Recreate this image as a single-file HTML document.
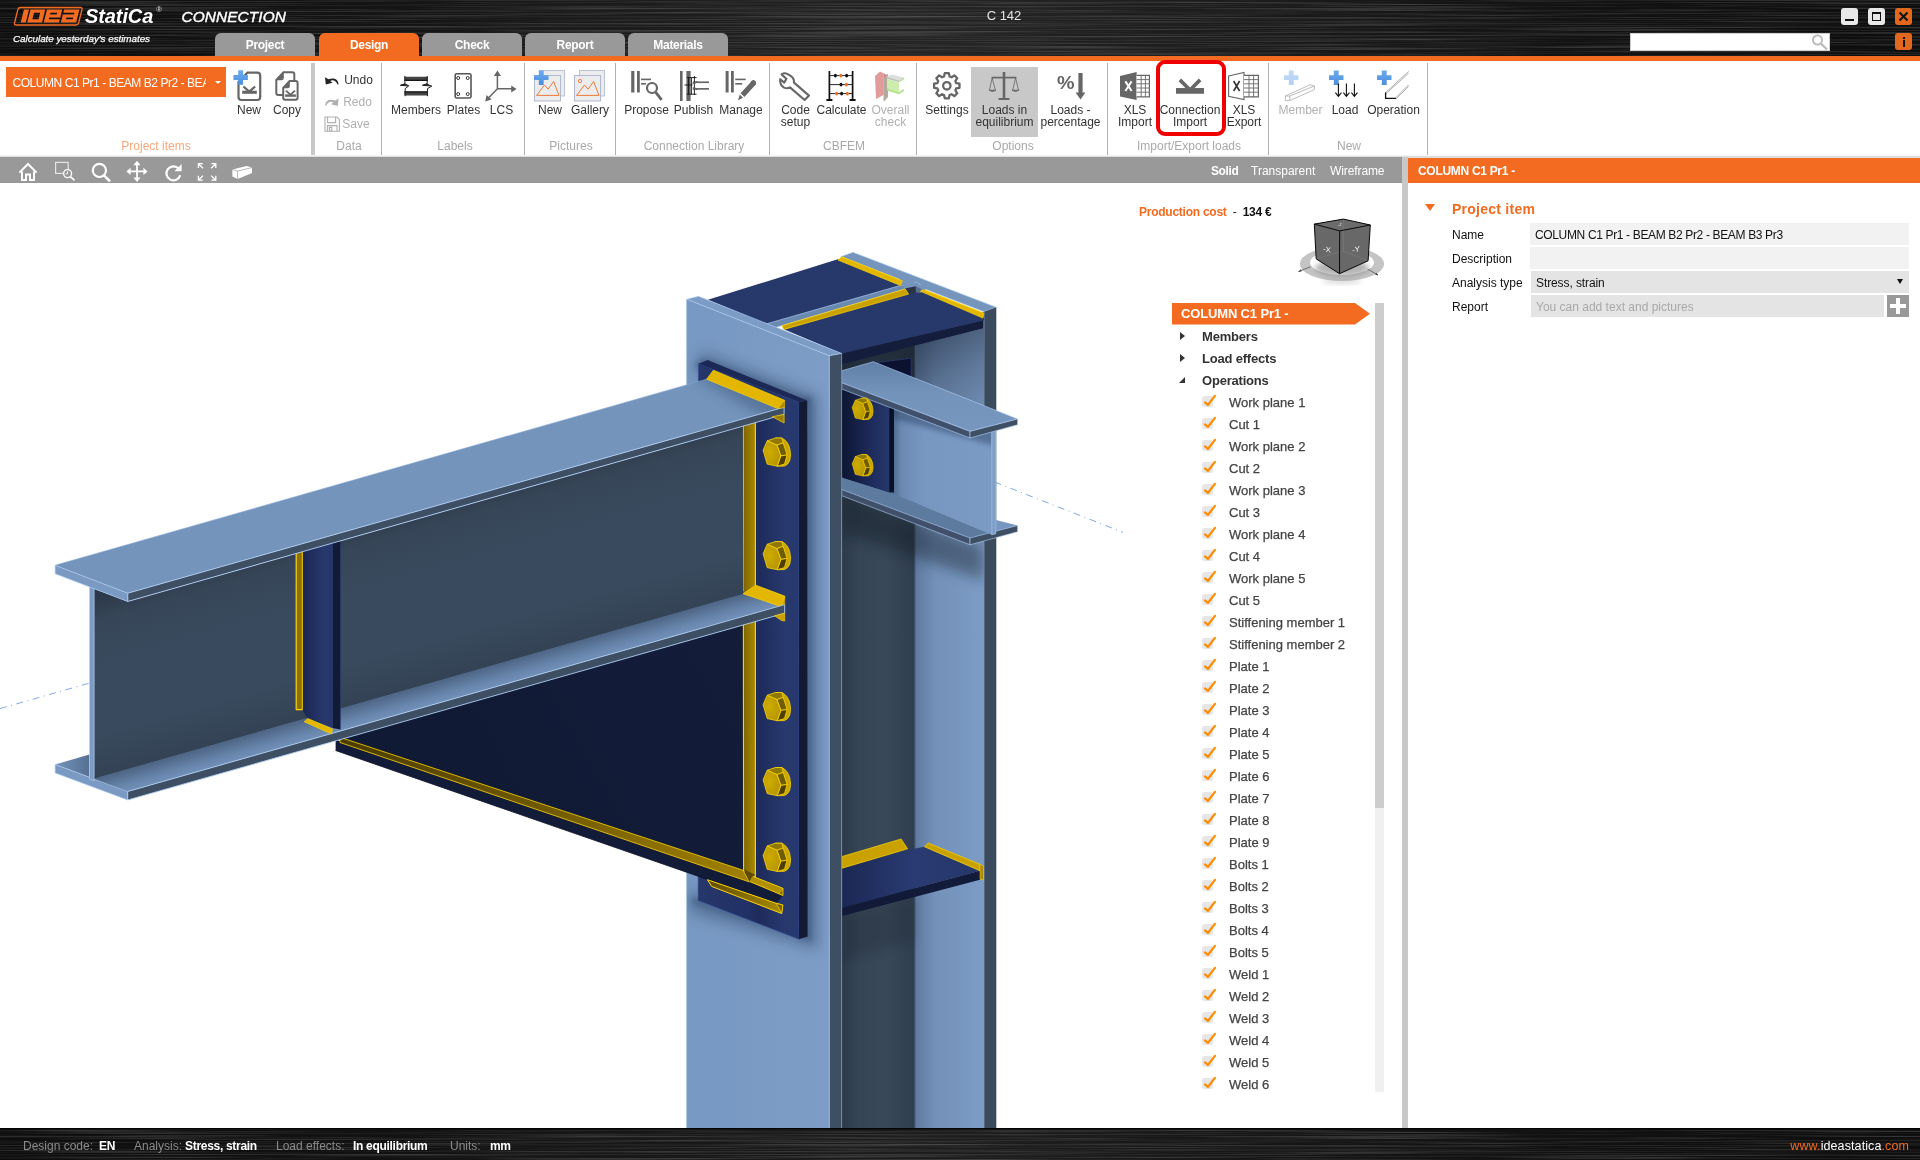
<!DOCTYPE html>
<html><head><meta charset="utf-8"><title>IDEA StatiCa Connection</title>
<style>
*{box-sizing:border-box;margin:0;padding:0}
html,body{width:1920px;height:1160px;overflow:hidden;background:#fff;-webkit-font-smoothing:antialiased;font-family:"Liberation Sans",sans-serif;font-size:12px;color:#333}
.abs{position:absolute}
#title{left:0;top:0;width:1920px;height:56px;background:#141414;overflow:hidden}
#oline{left:0;top:56px;width:1920px;height:5px;background:#f26b21}
.tab{position:absolute;top:33px;width:100px;height:23px;background:#999;border-radius:6px 6px 0 0;color:#fff;font-weight:bold;font-size:12px;text-align:center;line-height:24px;letter-spacing:-0.3px}
.tab.on{background:#f26b21}
.wbtn{position:absolute;width:17px;height:17px;border-radius:3px;background:#e8e8e8}
#ribbon{left:0;top:61px;width:1920px;height:96px;background:#fff}
.sep{position:absolute;top:2px;width:1px;height:92px;background:#b4b4b4}
.glab{position:absolute;top:78px;height:14px;line-height:14px;font-size:12px;color:#a9a9a9;text-align:center;white-space:nowrap;transform:translateX(-50%)}
.blab{position:absolute;top:43px;line-height:12.4px;font-size:12px;color:#333;text-align:center;white-space:nowrap;transform:translateX(-50%)}
.blab.dis{color:#b0b0b0}
.ico{position:absolute;overflow:visible}
#vbar{left:0;top:157px;width:1402px;height:26px;background:#999}
.vtxt{position:absolute;top:1px;line-height:27px;color:#fff;font-size:12px;white-space:nowrap}
#split{left:1402px;top:157px;width:6px;height:971px;background:#c8c8c8}
#rhead{left:1408px;top:157px;width:512px;height:26px;background:#f26b21;border-top:1px solid #d9dde2;color:#fff;font-weight:bold;font-size:12px;line-height:27px;padding-left:10px;letter-spacing:-0.3px}
#rpanel{left:1408px;top:183px;width:512px;height:945px;background:#fff}
.plab{position:absolute;left:44px;font-size:12px;color:#111;line-height:24px;white-space:nowrap}
.pfld{position:absolute;left:122px;height:22px;background:#f2f2f2;font-size:12px;color:#111;line-height:24px;padding-left:5px;white-space:nowrap;letter-spacing:-0.35px}
#status{left:0;top:1128px;width:1920px;height:32px;background:#121212;overflow:hidden}
.st{position:absolute;top:0;line-height:36px;font-size:12px;white-space:nowrap;color:#8a8a8a}
.st b{color:#fff;font-weight:bold;letter-spacing:-0.3px}
#view{left:0;top:183px;width:1402px;height:945px;background:#fff;overflow:hidden}
.ti{position:absolute;left:1229px;font-size:13px;color:#444;line-height:24px;white-space:nowrap;-webkit-text-stroke:0.25px #444}
.tg{position:absolute;left:1202px;font-size:13px;font-weight:bold;color:#333;line-height:24px;white-space:nowrap;letter-spacing:-0.2px}
.cb{position:absolute;left:1202px;width:11px;height:11px;background:#e6e6e6;border-radius:2.5px}
#wrap{position:absolute;left:0;top:0;width:1920px;height:1160px;will-change:transform;transform:translateZ(0)}
</style></head><body><div id="wrap">
<svg width="0" height="0" style="position:absolute"><defs>
<filter id="brush" x="0" y="0" width="100%" height="100%">
<feTurbulence type="fractalNoise" baseFrequency="0.004 0.8" numOctaves="3" seed="7" result="n"/>
<feColorMatrix type="matrix" values="0 0 0 0 1  0 0 0 0 1  0 0 0 0 1  0.42 0 0 0 -0.175"/>
</filter>
<linearGradient id="hl" x1="0" y1="0" x2="1" y2="0"><stop offset="0" stop-color="#fff" stop-opacity="0"/><stop offset="0.22" stop-color="#fff" stop-opacity="0.035"/><stop offset="0.48" stop-color="#fff" stop-opacity="0.095"/><stop offset="0.75" stop-color="#fff" stop-opacity="0.035"/><stop offset="1" stop-color="#fff" stop-opacity="0"/></linearGradient>
</defs></svg>
<div id="title" class="abs">
<svg class="abs" style="left:0;top:0" width="1920" height="56"><rect width="1920" height="56" fill="#0d0d0d"/><rect width="1920" height="56" fill="#fff" filter="url(#brush)"/><rect width="1920" height="56" fill="url(#hl)"/></svg>
<svg class="abs" style="left:10px;top:4px" width="80" height="26" viewBox="10 4 80 26">
<g transform="translate(22.3,9.5) skewX(-14) scale(1.02,1)" fill="#f26b21">
<rect x="1.6" y="0" width="5" height="13"/>
<path d="M8,0h14.5v13h-14.5z M12.3,3.2v6.6h6v-6.6z" fill-rule="evenodd"/>
<path d="M24.2,0h15v8h-10.8v1.8h10.8v3.2h-15z M28.4,3.2v1.8h6.6v-1.8z" fill-rule="evenodd"/>
<path d="M41,0h15v13h-15v-8h10.8v-1.8h-10.8z M45.2,8v1.8h6.6v-1.8z" fill-rule="evenodd"/>
</g>
<path d="M20.5,7.5 H80.5 Q82.5,7.5 82,9.5 L78.6,23 Q78,25 76,25 H16 Q14,25 14.5,23 L17.9,9.5 Q18.5,7.5 20.5,7.5Z" fill="none" stroke="#f26b21" stroke-width="1.3"/>
</svg>
<div class="abs" style="left:85px;top:4px;font:italic bold 20px 'Liberation Sans',sans-serif;color:#fff;line-height:24px;letter-spacing:-0.1px">StatiCa</div>
<div class="abs" style="left:156px;top:5px;font:italic 8px 'Liberation Sans',sans-serif;color:#ddd;line-height:10px">&reg;</div>
<div class="abs" style="left:181.5px;top:6px;font:italic 15.4px 'Liberation Sans',sans-serif;color:#fff;line-height:22px;letter-spacing:0.1px;-webkit-text-stroke:0.4px #fff">CONNECTION</div>
<div class="abs" style="left:13px;top:32px;font:italic 9.9px 'Liberation Sans',sans-serif;color:#fff;line-height:13px;letter-spacing:-0.05px;-webkit-text-stroke:0.25px #fff;white-space:nowrap">Calculate yesterday's estimates</div>
<div class="abs" style="left:954px;top:8px;width:100px;text-align:center;font-size:13px;color:#e6e6e6;line-height:16px">C 142</div>
<div class="tab" style="left:215px">Project</div>
<div class="tab on" style="left:319px">Design</div>
<div class="tab" style="left:422px">Check</div>
<div class="tab" style="left:525px">Report</div>
<div class="tab" style="left:628px">Materials</div>
<div class="wbtn" style="left:1841px;top:8px"><div class="abs" style="left:4px;top:11px;width:9px;height:2px;background:#111"></div></div>
<div class="wbtn" style="left:1868px;top:8px"><div class="abs" style="left:4px;top:4px;width:9px;height:9px;border:1.5px solid #111;border-top-width:2.5px"></div></div>
<div class="wbtn" style="left:1895px;top:8px;background:#e2681e"><svg class="abs" style="left:0;top:0" width="17" height="17"><path d="M4.5,4.5L12.5,12.5M12.5,4.5L4.5,12.5" stroke="#111" stroke-width="2"/></svg></div>
<div class="wbtn" style="left:1895px;top:33px;background:#e2681e"><div class="abs" style="left:7.5px;top:3.5px;width:2.4px;height:2.4px;background:#111"></div><div class="abs" style="left:7.5px;top:7px;width:2.4px;height:6.5px;background:#111"></div></div>
<div class="abs" style="left:1630px;top:33px;width:200px;height:18px;background:#fff;border:1px solid #cfcfcf"></div>
<svg class="abs" style="left:1810px;top:33px" width="20" height="18"><circle cx="7.5" cy="7" r="4.6" fill="none" stroke="#b9b9b9" stroke-width="1.8"/><path d="M10.8,10.5L17,16.5" stroke="#b9b9b9" stroke-width="2.2"/></svg>
</div>
<div id="oline" class="abs"></div>
<div id="ribbon" class="abs">
<div class="abs" style="left:6px;top:6px;width:220px;height:30px;background:#f26b21"></div>
<div class="abs" style="left:12.5px;top:6.5px;width:193px;height:30px;overflow:hidden;white-space:nowrap;color:#fff;font-size:12px;line-height:30px;letter-spacing:-0.45px">COLUMN C1 Pr1 - BEAM B2 Pr2 - BEAM B3 Pr3</div>
<div class="abs" style="left:215px;top:20px;width:0;height:0;border-left:3px solid transparent;border-right:3px solid transparent;border-top:3.5px solid #fff"></div>
<div class="abs" style="left:311px;top:2px;width:4px;height:92px;background:#c8c8c8"></div>
<div class="sep" style="left:381px"></div><div class="sep" style="left:524px"></div><div class="sep" style="left:615px"></div><div class="sep" style="left:769px"></div><div class="sep" style="left:916px"></div><div class="sep" style="left:1107px"></div><div class="sep" style="left:1268px"></div><div class="sep" style="left:1427px"></div>
<div class="abs" style="left:971px;top:6px;width:67px;height:70px;background:#c8c8c8"></div>
<div class="glab" style="left:156px;color:#f6a77a">Project items</div>
<div class="glab" style="left:349px">Data</div>
<div class="glab" style="left:455px">Labels</div>
<div class="glab" style="left:571px">Pictures</div>
<div class="glab" style="left:694px">Connection Library</div>
<div class="glab" style="left:844px">CBFEM</div>
<div class="glab" style="left:1013px">Options</div>
<div class="glab" style="left:1189px">Import/Export loads</div>
<div class="glab" style="left:1349px">New</div>
<div class="blab" style="left:249px">New</div>
<div class="blab" style="left:287px">Copy</div>
<div class="blab" style="left:358.5px;top:13px">Undo</div>
<div class="blab dis" style="left:357.5px;top:35px">Redo</div>
<div class="blab dis" style="left:356px;top:57px">Save</div>
<div class="blab" style="left:416px">Members</div>
<div class="blab" style="left:463.5px">Plates</div>
<div class="blab" style="left:501.5px">LCS</div>
<div class="blab" style="left:550px">New</div>
<div class="blab" style="left:590px">Gallery</div>
<div class="blab" style="left:646.5px">Propose</div>
<div class="blab" style="left:693.5px">Publish</div>
<div class="blab" style="left:741px">Manage</div>
<div class="blab" style="left:795.5px">Code<br>setup</div>
<div class="blab" style="left:841.5px">Calculate</div>
<div class="blab dis" style="left:890.5px">Overall<br>check</div>
<div class="blab" style="left:947px">Settings</div>
<div class="blab" style="left:1004.5px">Loads in<br>equilibrium</div>
<div class="blab" style="left:1070.5px">Loads -<br>percentage</div>
<div class="blab" style="left:1135px">XLS<br>Import</div>
<div class="blab" style="left:1190px">Connection<br>Import</div>
<div class="blab" style="left:1244px">XLS<br>Export</div>
<div class="blab dis" style="left:1300.5px">Member</div>
<div class="blab" style="left:1345px">Load</div>
<div class="blab" style="left:1393.5px">Operation</div>
<div class="abs" style="left:1156px;top:-1px;width:70px;height:76px;border:4px solid #f00000;border-radius:9px"></div>
<svg class="abs" style="left:0;top:0" width="1920" height="96" viewBox="0 61 1920 96">
<defs>
<linearGradient id="plus" x1="0" y1="0" x2="0" y2="1"><stop offset="0" stop-color="#6dabef"/><stop offset="1" stop-color="#4d8fde"/></linearGradient>
<path id="pl" d="M4.8,0h4.9v4.8h4.8v4.9h-4.8v4.8h-4.9v-4.8h-4.8v-4.9h4.8z"/>
<path id="vb" d="M0,0 L2,-2 L7,3 L12,-2 L14,0 L9.2,5 H14 V10 H0 V5 H4.8Z"/>
</defs>
<!-- New -->
<path d="M247.5,72.6 H257.2 Q260.2,72.6 260.2,75.6 V97 Q260.2,100 257.2,100 H241.5 Q238.5,100 238.5,97 V81.6Z" fill="#fff" stroke="#666" stroke-width="2.2"/>
<path d="M243.4,86.5 L249.25,91.6 L255.1,86.5" fill="none" stroke="#666" stroke-width="2.3"/>
<rect x="242.2" y="90.7" width="14.6" height="3.1" fill="#666"/>
<use href="#pl" x="233.4" y="70.3" fill="url(#plus)"/>
<!-- Copy -->
<path d="M283.5,72.3 H292.3 Q294.3,72.3 294.3,74.3 V93 Q294.3,95 292.3,95 H278.3 Q276.3,95 276.3,93 V80Z" fill="#fff" stroke="#666" stroke-width="2"/>
<path d="M276.6,80.3 L283.8,72.6 V78 Q283.8,80.3 281.5,80.3Z" fill="#666"/>
<path d="M289.6,81 H295.6 Q297.6,81 297.6,83 V97.8 Q297.6,99.8 295.6,99.8 H285.2 Q283.2,99.8 283.2,97.8 V88Z" fill="#fff" stroke="#666" stroke-width="2"/>
<path d="M283.5,88.2 L289.8,81.3 V86.2 Q289.8,88.2 287.8,88.2Z" fill="#666"/>
<path d="M285.8,90.6 L290.5,94.6 L295,90.6" fill="none" stroke="#666" stroke-width="1.8"/>
<rect x="285.1" y="94.4" width="10.8" height="2.4" fill="#666"/>
<!-- Undo -->
<path d="M325,77.2 L325.8,84.6 L332.6,82.8 L330.2,81 Q334.5,78.6 337.6,84.4 L338.6,84.2 Q337.6,76.4 328.4,79.2Z" fill="#222"/>
<!-- Redo -->
<path d="M338.6,98.6 L337.8,106 L331,104.2 L333.4,102.4 Q329.1,100 326,105.8 L325,105.6 Q326,97.8 335.2,100.6Z" fill="#b0b0b0"/>
<!-- Save -->
<path d="M325,117 H337 L339.4,119.4 V131.2 H325Z M327.6,117 V122.6 H335.6 V117 M327.4,131 V125.6 H337 V131 M329.4,127.4 h2.4 v3.4 h-2.4z" fill="none" stroke="#b0b0b0" stroke-width="1.1"/>
<!-- Members -->
<path d="M404.4,76.8 H427.8 V80.8 H404.4Z M404.4,91.4 H427.8 V95.5 H404.4Z" fill="#444"/>
<path d="M404.4,80.3H427.8M404.4,91.9H427.8" stroke="#000" stroke-width="1" fill="none"/>
<path d="M404.9,76 V83.7 L400.3,85.3 L408.6,86 L405.2,88.6 V96.2 M427.2,76 V83.7 L422.4,85.3 L431.8,86.1 L427.5,88.6 V96.2" stroke="#222" stroke-width="1" fill="none"/>
<path d="M400.3,85.3 L405.4,83.6 L409.8,86.1Z M422.2,85.3 L427.2,83.6 L431.8,86.1Z" fill="#222"/>
<!-- Plates -->
<rect x="455.2" y="73.7" width="15.8" height="24.3" rx="1.6" fill="#fff" stroke="#555" stroke-width="1.6"/>
<g fill="none" stroke="#333" stroke-width="1"><circle cx="458.2" cy="78" r="1.5"/><circle cx="467.7" cy="78" r="1.5"/><circle cx="458.2" cy="94.1" r="1.5"/><circle cx="467.7" cy="94.1" r="1.5"/></g>
<!-- LCS -->
<path d="M497.4,74 V88.8 H512.5 M497.4,88.8 L488,98.6" stroke="#666" stroke-width="1.5" fill="none"/>
<path d="M497.4,70.4 L501,76 H493.8Z M516.6,88.9 L511.2,92.4 V85.4Z M485.2,101.5 L486.6,95 L491.6,99.6Z" fill="#666"/>
<!-- New picture -->
<g id="pic"><rect x="539.5" y="70.5" width="25" height="25.5" fill="#ececec" stroke="#b4bdd2" stroke-width="0.9"/><rect x="534.5" y="75.5" width="26" height="25.5" fill="#ececec" stroke="#a9b3cb" stroke-width="0.9"/>
<path d="M536.5,95.4 L544.5,85 L548,89.2 L553.6,81.5 L559,95.4Z" fill="none" stroke="#f07a3c" stroke-width="1"/></g>
<rect x="533.6" y="70" width="15" height="16" fill="#ececec" opacity="0.0"/>
<use href="#pl" x="534" y="70.4" fill="url(#plus)"/>
<!-- Gallery -->
<use href="#pic" x="40" y="0"/>
<circle cx="580" cy="81" r="1.7" fill="none" stroke="#f07a3c" stroke-width="0.9"/>
<!-- Propose -->
<g fill="#666"><rect x="631.2" y="71" width="3.2" height="21.5"/><rect x="637" y="71" width="2.8" height="21.5"/><rect x="641" y="78.6" width="10" height="1.6"/><rect x="641" y="83" width="5" height="1.6"/></g>
<circle cx="652" cy="88" r="5" fill="#fff" stroke="#666" stroke-width="2.2"/><path d="M655.6,92.2 L661.6,99.8" stroke="#666" stroke-width="2.8"/>
<!-- Publish -->
<g fill="#666"><rect x="680" y="71" width="2.6" height="30"/><rect x="686.4" y="71" width="4.2" height="30"/><rect x="693" y="81.4" width="16" height="1.7"/><rect x="693" y="88" width="16" height="1.7"/></g>
<path d="M684.5,85 h8 M686.8,77.6 h9.8 M686.8,94.2 h9.8 M694.4,76 v19 M688.6,77.6 v16.6 M691.4,77.6 v16.6" stroke="#111" stroke-width="0.9" fill="none"/>
<path d="M692.6,83.1 q3,0.2 4.6,-1.7 M692.6,88 q3,-0.2 4.6,1.7" stroke="#666" stroke-width="1.6" fill="none"/>
<!-- Manage -->
<g fill="#666"><rect x="725.6" y="71" width="3" height="21.5"/><rect x="731" y="71" width="2.8" height="21.5"/><rect x="735.2" y="78.6" width="10.5" height="1.6"/><rect x="735.2" y="83" width="7" height="1.6"/></g>
<path d="M752.2,80.4 L756,84.2 L744.4,97 L740.6,93.2Z M739.8,94.6 L743,97.8 L738,100.2Z" fill="#666"/>
<path d="M750.6,82 q2.4,-3.4 4.8,-1 q2,2.2 -1.2,4.6z" fill="#666"/>
<!-- Code setup: wrench -->
<path d="M788.6,74.6 Q785,72 781.6,74.4 L786.4,78.8 L784.2,82.6 L780.2,79.2 Q779.6,85 784,87.6 Q787,89 790,87.4 L804.6,100 L809,95.6 L794,82.6 Q794.6,77.6 788.6,74.6Z" fill="#fff" stroke="#666" stroke-width="2.1" stroke-linejoin="round"/>
<!-- Calculate: abacus -->
<path d="M829.4,71 V100 M852.6,71 V100" stroke="#111" stroke-width="1.7"/><path d="M826.4,100 H832.4 M849.6,100 H855.6" stroke="#111" stroke-width="1.8"/>
<path d="M829.4,75.6 H852.6 M829.4,84.6 H852.6 M829.4,93.6 H852.6" stroke="#111" stroke-width="0.9"/>
<g fill="#111"><ellipse cx="835.4" cy="75.6" rx="1.5" ry="1.9"/><ellipse cx="846.6" cy="75.6" rx="1.5" ry="1.9"/><ellipse cx="841" cy="84.6" rx="1.5" ry="1.9"/><ellipse cx="841.6" cy="93.6" rx="1.5" ry="1.9"/></g>
<g fill="#f26b21"><ellipse cx="840.8" cy="75.6" rx="1.5" ry="1.9"/><ellipse cx="846.4" cy="84.6" rx="1.5" ry="1.9"/><ellipse cx="836.6" cy="93.6" rx="1.5" ry="1.9"/><ellipse cx="847.4" cy="93.6" rx="1.5" ry="1.9"/></g>
<!-- Overall check -->
<g opacity="0.85"><path d="M875,76 L880,71.4 L883.6,73.4 V95 L876,99Z" fill="#de8a8a"/><path d="M880,71.4 L887,75 V98 L883.6,101 L883.6,73.4Z" fill="#c96f6f"/><path d="M884,78 L888,73.6 V97 L884,101.6Z" fill="#a99a8c"/>
<path d="M886.5,76.4 L892,74.4 L904,77.4 L899,80.4Z" fill="#d9d9d9"/><path d="M886.5,76.4 L899,80.4 V82.2 L886.5,78.4Z" fill="#b5b5b5"/><path d="M887,78.6 L899,82.4 L899,92 L887,88.6Z" fill="#c4ea9f"/><path d="M899,80.4 L904,77.4 V79.2 L899,82.2Z M899,92 L904,89 V91 L899,94.2 L887,90.6 V88.6Z" fill="#a8dc78"/></g>
<!-- Settings gear -->
<g transform="translate(946.8,85.8)"><path id="gear" d="M-2.2,-13.2 H2.2 L3,-9.6 L5.2,-8.7 L8.3,-10.8 L11.4,-7.7 L9.3,-4.6 L10.2,-2.4 L13.8,-1.7 V2.7 L10.2,3.4 L9.3,5.6 L11.4,8.7 L8.3,11.8 L5.2,9.7 L3,10.6 L2.2,14.2 H-2.2 L-3,10.6 L-5.2,9.7 L-8.3,11.8 L-11.4,8.7 L-9.3,5.6 L-10.2,3.4 L-13.8,2.7 V-1.7 L-10.2,-2.4 L-9.3,-4.6 L-11.4,-7.7 L-8.3,-10.8 L-5.2,-8.7 L-3,-9.6Z" transform="translate(0,-0.5) scale(0.92)" fill="#fff" stroke="#666" stroke-width="2.5" stroke-linejoin="round"/><circle cx="0" cy="0" r="3.7" fill="#fff" stroke="#666" stroke-width="2.3"/></g>
<!-- Scales -->
<g stroke="#666" fill="none"><path d="M1004,72 V98.6" stroke-width="2.6"/><path d="M998.6,99 H1009.4" stroke-width="2"/><path d="M991.6,77.6 H1016.4" stroke-width="1.7"/><path d="M992.2,78 L989.4,90.4 M992.2,78 L995.4,90.4 M1015.6,78 L1012.6,90.4 M1015.6,78 L1018.6,90.4" stroke-width="0.8"/></g>
<path d="M989,90.2 H996 Q992.5,92.6 989,90.2Z M1012,90.2 H1019 Q1015.5,92.6 1012,90.2Z" fill="#666" stroke="#666" stroke-width="0.8"/>
<!-- Loads % -->
<text x="1057" y="88.6" font-family="Liberation Sans, sans-serif" font-weight="bold" font-size="18.5" fill="#666" textLength="17.5" lengthAdjust="spacingAndGlyphs">%</text>
<path d="M1078.4,73 H1082.6 V92.6 H1085.4 L1080.5,99.4 L1075.6,92.6 H1078.4Z" fill="#666"/>
<!-- XLS import -->
<path d="M1120,76 L1136.6,72 V100 L1120,96.4Z" fill="#666"/>
<path d="M1136.6,75.4 H1149.4 V96.8 H1136.6" fill="#fff" stroke="#666" stroke-width="1.2"/>
<path d="M1136.6,79.6H1149.4M1136.6,83.8H1149.4M1136.6,88H1149.4M1136.6,92.2H1149.4M1141.2,75.4V96.8M1145.4,75.4V96.8" stroke="#666" stroke-width="0.9"/>
<path d="M1125.4,81.4 L1131.6,91 M1131.6,81.4 L1125.4,91" stroke="#fff" stroke-width="2"/>
<!-- Connection import -->
<path d="M1176,88 H1185.4 L1178.6,81.2 L1181.2,78.6 L1190,87.4 L1198.8,78.6 L1201.4,81.2 L1194.6,88 H1204 V93.8 H1176Z" fill="#666"/>
<!-- XLS export -->
<path d="M1228.6,76 L1244,72.4 V99.6 L1228.6,96.2Z" fill="#fff" stroke="#666" stroke-width="1.1"/>
<path d="M1244,75.4 H1258.4 V96.8 H1244" fill="#fff" stroke="#666" stroke-width="1.2"/>
<path d="M1244,79.6H1258.4M1244,83.8H1258.4M1244,88H1258.4M1244,92.2H1258.4M1249,75.4V96.8M1253.6,75.4V96.8" stroke="#666" stroke-width="0.9"/>
<path d="M1233.6,81 L1239.6,91 M1239.6,81 L1233.6,91" stroke="#333" stroke-width="1.6"/>
<!-- Member -->
<use href="#pl" x="1284" y="70.4" fill="url(#plus)" opacity="0.42"/>
<path d="M1285.4,96 L1310,84.8 L1314.4,86 V89.6 L1289.8,100.6 H1285.4Z M1285.4,96 H1289.8 V100.6 M1289.8,96 L1314.4,86" fill="#fff" stroke="#b4b4b4" stroke-width="0.9" stroke-linejoin="round"/>
<!-- Load -->
<use href="#pl" x="1329" y="70.4" fill="url(#plus)"/>
<path d="M1338.4,83.6 V96 M1346.4,83.6 V96 M1354.4,83.6 V96" stroke="#111" stroke-width="1.1"/>
<path d="M1335.4,92.6 L1338.4,96.4 L1341.4,92.6 M1343.4,92.6 L1346.4,96.4 L1349.4,92.6 M1351.4,92.6 L1354.4,96.4 L1357.4,92.6" stroke="#111" stroke-width="1.1" fill="none"/>
<!-- Operation -->
<use href="#pl" x="1377" y="70.4" fill="url(#plus)"/>
<path d="M1385.6,92.6 L1408.6,71.4 M1385.6,94 L1408.6,73.2 M1396,99 L1408.6,86.4 M1396,97.4 L1408.6,84.8" stroke="#9a9a9a" stroke-width="0.8"/>
<path d="M1385.6,92.6 V98.4 H1396" stroke="#111" stroke-width="1.3" fill="none"/>
</svg>
</div>
<div id="vbar" class="abs">
<svg class="abs" style="left:0;top:0" width="300" height="26" viewBox="0 157 300 26" fill="none" stroke="#fff">
<path d="M19.4,172.6 L28,164 L36.6,172.6 M22,171.4 V180 H26 V174.6 H30 V180 H34 V171.4" stroke-width="2"/>
<rect x="55.6" y="162.4" width="12.6" height="11" stroke-width="1.2" stroke="#e4e4e4"/>
<circle cx="67.6" cy="173.6" r="4" stroke-width="1.3" fill="#999"/><path d="M70.4,176.6 L74.6,180.4" stroke-width="1.5"/><path d="M67.6,171.4 V173.8 H65.6" stroke-width="0.9"/>
<circle cx="99.4" cy="170.4" r="6.6" stroke-width="2.2"/><path d="M104,175.4 L110,181.4" stroke-width="2.6"/>
<path d="M137,163.4 V179.6 M128.6,171.4 H145.2" stroke-width="1.8"/>
<path d="M137,160.8 L140.6,165.2 H133.4Z M137,182 L140.6,177.6 H133.4Z M126.4,171.4 L130.6,167.8 V175Z M147.6,171.4 L143.4,167.8 V175Z" fill="#fff" stroke="none"/>
<path d="M178.6,168.6 A7,7 0 1 0 180.2,175.2" stroke-width="2.2"/><path d="M181.6,164 V171.2 H174.4Z" fill="#fff" stroke="none"/>
<g stroke-width="1.3"><path d="M198.4,163.6 L203,168.2 M198.4,168 V163.6 H202.8 M215.8,163.6 L211.2,168.2 M211.4,163.6 H215.8 V168 M198.4,180.2 L203,175.6 M198.4,175.8 V180.2 H202.8 M215.8,180.2 L211.2,175.6 M211.4,180.2 H215.8 V175.8"/></g>
<path d="M232.4,169.4 L246.6,166 L252,167.6 V173 L237.6,179 L232.4,176.6Z" fill="#fff" stroke="none"/><path d="M232.4,169.4 L237.6,171 V179 M237.6,171 L252,167.6" stroke="#999" stroke-width="0.7"/>
</svg>
<div class="vtxt" style="left:1211px;font-weight:bold;letter-spacing:-0.4px">Solid</div>
<div class="vtxt" style="left:1251px">Transparent</div>
<div class="vtxt" style="left:1330px;letter-spacing:-0.1px">Wireframe</div>
</div>
<div class="abs" style="left:0;top:155px;width:1920px;height:2px;background:linear-gradient(#fff,#d4d4d4)"></div>
<div id="split" class="abs"></div>
<div id="rhead" class="abs">COLUMN C1 Pr1 -</div>
<div id="rpanel" class="abs">
<div class="abs" style="left:17px;top:21px;width:0;height:0;border-left:5.5px solid transparent;border-right:5.5px solid transparent;border-top:7.5px solid #f26b21"></div>
<div class="abs" style="left:44px;top:17px;font-size:14px;font-weight:bold;color:#f26b21;line-height:18px;letter-spacing:0.25px">Project item</div>
<div class="plab" style="top:40px">Name</div><div class="pfld" style="top:40px;width:379px">COLUMN C1 Pr1 - BEAM B2 Pr2 - BEAM B3 Pr3</div>
<div class="plab" style="top:64px">Description</div><div class="pfld" style="top:64px;width:379px"></div>
<div class="plab" style="top:88px">Analysis type</div><div class="pfld" style="top:88px;left:123px;width:378px;background:#e4e4e4;letter-spacing:-0.1px">Stress, strain</div>
<div class="abs" style="left:489px;top:96px;width:0;height:0;border-left:3.5px solid transparent;border-right:3.5px solid transparent;border-top:5px solid #111"></div>
<div class="plab" style="top:112px">Report</div><div class="pfld" style="top:112px;left:123px;width:353px;background:#e4e4e4;color:#a8a8a8;letter-spacing:0">You can add text and pictures</div>
<div class="abs" style="left:479px;top:112px;width:22px;height:22px;background:#999"><div class="abs" style="left:9px;top:3px;width:4px;height:16px;background:#fff"></div><div class="abs" style="left:3px;top:9px;width:16px;height:4px;background:#fff"></div></div>
</div>
<div id="status" class="abs"><svg class="abs" style="left:0;top:0" width="1920" height="32"><rect width="1920" height="32" fill="#0d0d0d"/><rect width="1920" height="32" fill="#fff" filter="url(#brush)"/><rect width="1920" height="32" fill="url(#hl)" opacity="0.7"/><rect width="1920" height="1.5" fill="#050505"/></svg>
<div class="st" style="left:23px">Design code:</div><div class="st" style="left:99px"><b>EN</b></div>
<div class="st" style="left:134px">Analysis:</div><div class="st" style="left:185px"><b>Stress, strain</b></div>
<div class="st" style="left:276px">Load effects:</div><div class="st" style="left:353px"><b>In equilibrium</b></div>
<div class="st" style="left:450px">Units:</div><div class="st" style="left:490px"><b>mm</b></div>
<div class="st" style="right:11px;color:#f26b21;font-size:12.5px;letter-spacing:0.1px">www.<span style="color:#fff">ideastatica</span>.com</div>
</div>
<div id="view" class="abs">
<svg class="abs" style="left:0;top:0" width="1402" height="945" viewBox="0 183 1402 945" shape-rendering="auto"><defs><linearGradient id="gWeb" x1="0" y1="0" x2="0" y2="1"><stop offset="0" stop-color="#2e3b4d"/><stop offset="1" stop-color="#3a4a5e"/></linearGradient><linearGradient id="gBweb" gradientUnits="userSpaceOnUse" x1="400" y1="510" x2="452" y2="694"><stop offset="0" stop-color="#2b3849"/><stop offset="0.12" stop-color="#364557"/><stop offset="0.35" stop-color="#3a4a5e"/><stop offset="0.7" stop-color="#3a4a5e"/><stop offset="0.92" stop-color="#334254"/><stop offset="1" stop-color="#2c3949"/></linearGradient><linearGradient id="gBbot" gradientUnits="userSpaceOnUse" x1="430" y1="684" x2="438" y2="712"><stop offset="0" stop-color="#4f6787"/><stop offset="0.5" stop-color="#6a88af"/><stop offset="1" stop-color="#7a9ac4"/></linearGradient><linearGradient id="gCweb" gradientUnits="userSpaceOnUse" x1="841" y1="0" x2="916" y2="0"><stop offset="0" stop-color="#2c3949"/><stop offset="0.25" stop-color="#364556"/><stop offset="0.6" stop-color="#394859"/><stop offset="1" stop-color="#2f3d4e"/></linearGradient><linearGradient id="gCrf" gradientUnits="userSpaceOnUse" x1="915" y1="0" x2="984" y2="0"><stop offset="0" stop-color="#5f7a9f"/><stop offset="0.3" stop-color="#7391b9"/><stop offset="1" stop-color="#7c9cc6"/></linearGradient><linearGradient id="gCrfTop" gradientUnits="userSpaceOnUse" x1="912" y1="325" x2="975" y2="450"><stop offset="0" stop-color="#1c2636" stop-opacity="0.7"/><stop offset="0.45" stop-color="#1c2636" stop-opacity="0.3"/><stop offset="1" stop-color="#1c2636" stop-opacity="0"/></linearGradient><linearGradient id="gCwTop" gradientUnits="userSpaceOnUse" x1="0" y1="350" x2="0" y2="520"><stop offset="0" stop-color="#141c28" stop-opacity="0.6"/><stop offset="1" stop-color="#141c28" stop-opacity="0"/></linearGradient><linearGradient id="gEP" gradientUnits="userSpaceOnUse" x1="698" y1="0" x2="800" y2="0"><stop offset="0" stop-color="#26376a"/><stop offset="0.5" stop-color="#213066"/><stop offset="0.6" stop-color="#1e2b5a"/><stop offset="0.85" stop-color="#28396f"/><stop offset="1" stop-color="#27386d"/></linearGradient><linearGradient id="gEPl" gradientUnits="userSpaceOnUse" x1="698" y1="0" x2="760" y2="0"><stop offset="0" stop-color="#27386b"/><stop offset="1" stop-color="#22326a"/></linearGradient><linearGradient id="gStf" gradientUnits="userSpaceOnUse" x1="303" y1="0" x2="333" y2="0"><stop offset="0" stop-color="#1b2752"/><stop offset="0.7" stop-color="#27386d"/><stop offset="1" stop-color="#26366a"/></linearGradient><linearGradient id="gWv" gradientUnits="userSpaceOnUse" x1="743" y1="0" x2="756" y2="0"><stop offset="0" stop-color="#7d6400"/><stop offset="1" stop-color="#aa8b00"/></linearGradient><linearGradient id="gFin" gradientUnits="userSpaceOnUse" x1="842" y1="0" x2="890" y2="0"><stop offset="0" stop-color="#0d1530"/><stop offset="0.6" stop-color="#1d2b5c"/><stop offset="1" stop-color="#27386b"/></linearGradient><linearGradient id="gHw" gradientUnits="userSpaceOnUse" x1="340" y1="740" x2="745" y2="875"><stop offset="0" stop-color="#4a3c00"/><stop offset="0.5" stop-color="#6e5800"/><stop offset="1" stop-color="#a08000"/></linearGradient><linearGradient id="gHa" gradientUnits="userSpaceOnUse" x1="400" y1="730" x2="700" y2="560"><stop offset="0" stop-color="#111a34"/><stop offset="1" stop-color="#131c39"/></linearGradient><linearGradient id="gCfl" gradientUnits="userSpaceOnUse" x1="686" y1="0" x2="830" y2="0"><stop offset="0" stop-color="#7798c2"/><stop offset="1" stop-color="#7d9dc7"/></linearGradient><linearGradient id="gCflSh" gradientUnits="userSpaceOnUse" x1="807" y1="0" x2="830" y2="0"><stop offset="0" stop-color="#3a5070" stop-opacity="0.55"/><stop offset="1" stop-color="#3a5070" stop-opacity="0"/></linearGradient><linearGradient id="gCflSh2" gradientUnits="userSpaceOnUse" x1="640" y1="340" x2="700" y2="400"><stop offset="0" stop-color="#3a5070" stop-opacity="0.0"/><stop offset="1" stop-color="#3a5070" stop-opacity="0"/></linearGradient><linearGradient id="gStT" gradientUnits="userSpaceOnUse" x1="842" y1="0" x2="984" y2="0"><stop offset="0" stop-color="#1b2855"/><stop offset="0.5" stop-color="#293b72"/><stop offset="1" stop-color="#25366a"/></linearGradient><linearGradient id="gSBw" gradientUnits="userSpaceOnUse" x1="894" y1="0" x2="992" y2="0"><stop offset="0" stop-color="#6685ad"/><stop offset="0.3" stop-color="#7797c1"/><stop offset="1" stop-color="#7b9bc5"/></linearGradient><linearGradient id="gSBt" gradientUnits="userSpaceOnUse" x1="0" y1="360" x2="0" y2="440"><stop offset="0" stop-color="#5f7ea6"/><stop offset="0.4" stop-color="#7393ba"/><stop offset="1" stop-color="#7797c0"/></linearGradient><radialGradient id="gBolt" cx="0.35" cy="0.45" r="0.7"><stop offset="0" stop-color="#cfac00"/><stop offset="1" stop-color="#b39400"/></radialGradient><filter id="soft" x="-20%" y="-20%" width="140%" height="140%"><feGaussianBlur stdDeviation="5"/></filter><filter id="soft2" x="-20%" y="-20%" width="140%" height="140%"><feGaussianBlur stdDeviation="2.5"/></filter><clipPath id="cCin"><polygon points="841.7,330 984,312 984,1128 841.7,1128"/></clipPath><clipPath id="cSBw"><polygon points="894,400 991.7,430 991.7,534.8 894,494"/></clipPath><clipPath id="cCfl"><polygon points="686.7,299.2 829.3,355.7 829.3,1128 686.7,1128"/></clipPath><clipPath id="cTf"><polygon points="55.1,565.3 706.6,379.2 784.1,407.2 127.7,593.2"/></clipPath><filter id="soft3" x="-30%" y="-30%" width="160%" height="160%"><feGaussianBlur stdDeviation="7"/></filter><linearGradient id="gBl" gradientUnits="userSpaceOnUse" x1="55" y1="0" x2="90" y2="0"><stop offset="0" stop-color="#7494bc"/><stop offset="1" stop-color="#566f92"/></linearGradient><linearGradient id="gWb" gradientUnits="userSpaceOnUse" x1="707" y1="880" x2="782" y2="910"><stop offset="0" stop-color="#5e4c00"/><stop offset="1" stop-color="#a88a00"/></linearGradient></defs>
<polyline points="0.0,708.6 89.0,683.2" fill="none" stroke="#80aae8" stroke-width="1" stroke-dasharray="7 4.5 1 4.5"/>
<polyline points="994.5,482.0 1123.0,532.3" fill="none" stroke="#80aae8" stroke-width="1" stroke-dasharray="7 4.5 1 4.5"/>
<polygon points="840.7,256.7 853.0,252.3 996.3,307.3 983.9,311.7" fill="#7595bd" stroke="#b2d0f6" stroke-width="0.6" stroke-linejoin="round" />
<polygon points="983.9,311.7 996.3,307.3 996.3,1128.0 983.9,1128.0" fill="#3b4a5d" />
<polyline points="983.9,311.7 983.9,1128.0" fill="none" stroke="#b2d0f6" stroke-width="0.6" />
<polygon points="841.7,350.0 915.8,330.0 915.8,1128.0 841.7,1128.0" fill="url(#gCweb)" />
<polygon points="914.7,320.0 984.0,312.0 984.0,1128.0 914.7,1128.0" fill="url(#gCrf)" />
<polygon points="914.7,320.0 984.0,312.0 984.0,470.0 914.7,470.0" fill="url(#gCrfTop)" />
<polygon points="841.7,350.0 915.8,330.0 915.8,520.0 841.7,520.0" fill="url(#gCwTop)" />
<polyline points="915.3,330.0 915.3,1128.0" fill="none" stroke="#4a5f7e" stroke-width="0.8" />
<g clip-path="url(#cCin)">
<polygon points="841.7,492.0 970.0,541.0 984.0,546.0 984.0,580.0 841.7,532.0" fill="#10161f" opacity="0.4" filter="url(#soft3)"/>
</g>
<polygon points="842.1,868.2 907.6,850.0 924.4,846.7 980.0,870.8 842.1,907.7" fill="url(#gStT)" />
<polygon points="842.1,907.7 980.0,870.8 980.0,879.8 842.1,916.0" fill="#131b3a" />
<polygon points="842.1,856.5 901.1,839.0 907.6,848.8 842.1,868.2" fill="#c9a200" stroke="#ffd500" stroke-width="0.7" stroke-linejoin="round" />
<polygon points="924.4,846.7 928.3,843.1 980.0,864.3 980.0,870.8" fill="#c9a200" stroke="#ffd500" stroke-width="0.7" stroke-linejoin="round" />
<polygon points="980.0,864.3 983.5,866.0 983.5,880.0 980.0,879.0" fill="#b08a00" stroke="#ffd500" stroke-width="0.5" stroke-linejoin="round" />
<polygon points="842.0,916.0 915.0,897.0 915.0,940.0 842.0,960.0" fill="#10161f" opacity="0.18" filter="url(#soft)"/>
<polygon points="876.0,362.8 911.0,358.3 911.0,377.0 888.0,368.0" fill="#0b1230" stroke="#2a3d7a" stroke-width="0.6" stroke-linejoin="round" />
<polygon points="841.7,478.0 894.0,494.0 991.7,534.8 1017.6,525.5 970.0,538.0 841.7,489.5" fill="#6f8eb6" />
<polygon points="841.7,477.5 894.0,493.5 991.7,534.4 970.0,538.0 841.7,489.5" fill="#5d7a9f" />
<polygon points="996.0,520.0 1017.6,525.5 996.0,531.5" fill="#7797c0" />
<polygon points="841.7,489.5 970.0,538.0 970.0,544.8 841.7,495.7" fill="#40506a" stroke="#b2d0f6" stroke-width="0.6" stroke-linejoin="round" />
<polygon points="970.0,538.0 1017.6,525.5 1017.6,531.7 970.0,544.8" fill="#3f4f63" stroke="#b2d0f6" stroke-width="0.6" stroke-linejoin="round" />
<polygon points="894.0,400.0 991.7,430.0 991.7,534.8 894.0,494.0" fill="url(#gSBw)" />
<g clip-path="url(#cSBw)">
<polygon points="890.0,398.0 995.0,430.0 995.0,446.0 890.0,418.0" fill="#2a3f62" opacity="0.45" filter="url(#soft2)"/>
<polygon points="886.0,400.0 898.0,400.0 898.0,500.0 886.0,500.0" fill="#2a3f62" opacity="0.3" filter="url(#soft2)"/>
</g>
<polygon points="991.7,429.0 995.8,428.0 995.8,533.8 991.7,534.8" fill="#7f9fc8" stroke="#b2d0f6" stroke-width="0.6" stroke-linejoin="round" />
<polygon points="841.7,389.0 889.3,407.0 889.3,492.5 841.7,477.3" fill="url(#gFin)" />
<polygon points="889.3,407.0 894.0,406.2 894.0,491.5 889.3,492.5" fill="#0a1026" />
<polygon points="841.7,370.8 873.4,361.7 1017.6,419.0 970.0,431.4 841.7,382.8" fill="url(#gSBt)" stroke="#b2d0f6" stroke-width="0.6" stroke-linejoin="round" />
<polygon points="841.7,382.8 970.0,431.4 970.0,438.0 841.7,389.0" fill="#40506a" stroke="#b2d0f6" stroke-width="0.6" stroke-linejoin="round" />
<polygon points="970.0,431.4 1017.6,419.0 1017.6,424.7 970.0,438.0" fill="#3f4f63" stroke="#b2d0f6" stroke-width="0.6" stroke-linejoin="round" />
<polygon points="707.9,299.8 838.5,259.0 905.0,285.8 770.0,326.0" fill="#27386b" />
<polygon points="783.8,329.2 908.6,292.5 922.0,289.5 984.0,315.0 984.0,320.3 841.7,353.8" fill="#27386b" />
<polygon points="841.7,353.8 983.0,320.6 983.0,328.2 841.7,364.2" fill="#141d3c" />
<polygon points="761.0,325.4 903.3,284.6 916.6,282.1 920.4,284.6 772.4,328.4" fill="#6a89b1" stroke="#b2d0f6" stroke-width="0.6" stroke-linejoin="round" />
<polygon points="899.0,279.0 905.0,278.0 927.0,288.5 921.0,292.5 908.0,289.0 902.0,286.5" fill="#7595bd" />
<polygon points="904.8,288.4 915.9,286.2 915.9,292.6 907.8,294.4" fill="#2a3442" />
<polygon points="915.9,286.2 921.4,289.0 920.7,293.1 915.9,292.6" fill="#5a6f8c" />
<polygon points="781.9,325.7 905.2,288.9 908.6,294.1 783.8,329.5" fill="#c9a200" stroke="#ffd500" stroke-width="0.7" stroke-linejoin="round" />
<polygon points="837.9,260.0 841.7,256.7 902.4,280.8 900.5,285.5" fill="#e3b600" stroke="#ffd500" stroke-width="0.7" stroke-linejoin="round" />
<polygon points="920.4,291.2 924.2,289.7 983.9,313.0 983.0,318.1" fill="#e3b600" stroke="#ffd500" stroke-width="0.7" stroke-linejoin="round" />
<polygon points="686.7,299.2 829.3,355.7 829.3,1128.0 686.7,1128.0" fill="url(#gCfl)" />
<polygon points="829.3,355.7 841.7,353.4 841.7,1128.0 829.3,1128.0" fill="#3f4f63" />
<polyline points="829.3,355.7 829.3,1128.0" fill="none" stroke="#b2d0f6" stroke-width="0.7" />
<polyline points="841.7,353.4 841.7,1128.0" fill="none" stroke="#7ea0cc" stroke-width="0.6" />
<polygon points="686.7,299.2 698.5,296.3 841.7,353.4 829.3,355.7" fill="#7c9cc6" stroke="#b2d0f6" stroke-width="0.6" stroke-linejoin="round" />
<polyline points="686.7,299.2 686.7,1128.0" fill="none" stroke="#8fb0dc" stroke-width="0.6" />
<g clip-path="url(#cCfl)">
<polygon points="694.0,372.0 703.0,352.0 818.0,396.0 818.0,950.0 690.0,912.0 690.0,890.0 799.0,930.0 799.0,405.0" fill="#2a3f62" opacity="0.42" filter="url(#soft3)"/>
<polygon points="799.0,400.0 812.0,397.0 812.0,942.0 692.0,903.0 692.0,897.0 799.0,936.0" fill="#2c4060" opacity="0.35" filter="url(#soft2)"/>
<polygon points="694.0,367.0 701.0,358.0 811.0,398.0 805.0,404.0" fill="#2c4060" opacity="0.3" filter="url(#soft2)"/>
</g>
<polygon points="698.4,363.7 798.8,401.9 799.0,939.3 698.1,900.5" fill="url(#gEP)" stroke="#3552a0" stroke-width="0.6" stroke-linejoin="round" />
<polygon points="798.8,401.9 807.2,400.4 807.6,936.4 799.0,939.3" fill="#121a35" />
<polygon points="698.4,363.7 707.6,360.0 807.2,400.4 798.8,401.9" fill="#1c2957" />
<polygon points="55.1,764.4 89.5,754.5 89.5,777.3" fill="url(#gBl)" />
<polygon points="55.1,764.4 127.7,791.5 127.7,800.0 55.1,772.9" fill="#7a9ac4" stroke="#b2d0f6" stroke-width="0.6" stroke-linejoin="round" />
<polygon points="338.0,739.0 743.4,624.5 743.4,870.5" fill="url(#gHa)" />
<polygon points="335.6,739.5 700.0,860.0 782.8,895.4 776.2,903.3 335.6,750.5" fill="#121b38" />
<polygon points="340.0,737.3 743.0,870.2 749.6,882.0 340.0,742.5" fill="url(#gHw)" stroke="#ffd500" stroke-width="0.8" stroke-linejoin="round" />
<polyline points="335.6,750.5 776.2,903.3" fill="none" stroke="#0c1226" stroke-width="0.8" />
<polygon points="707.4,879.7 711.6,886.4 781.6,913.5 782.8,905.0 776.2,903.3" fill="url(#gWb)" stroke="#ffd600" stroke-width="1.0" stroke-linejoin="round" />
<polygon points="776.2,903.3 782.8,905.0 781.6,913.5" fill="#7a6200" stroke="#ffd600" stroke-width="0.7" stroke-linejoin="round" />
<polygon points="752.0,876.0 782.8,888.2 782.8,895.4 749.6,881.5" fill="#b09000" stroke="#ffd600" stroke-width="0.9" stroke-linejoin="round" />
<polygon points="779.0,893.6 782.8,888.2 782.8,895.4" fill="#7a6200" stroke="#ffd600" stroke-width="0.6" stroke-linejoin="round" />
<polygon points="743.2,425.4 755.4,421.9 755.4,876.5 743.6,870.5" fill="url(#gWv)" stroke="#ffd600" stroke-width="1.1" stroke-linejoin="round" />
<polygon points="743.6,869.0 755.4,875.0 752.0,877.0 749.6,882.0" fill="#5e4a00" />
<polygon points="93.0,776.0 743.1,591.0 784.7,604.6 127.7,791.5 93.0,778.6" fill="url(#gBbot)" />
<polygon points="94.1,588.7 127.7,601.5 742.8,426.2 743.4,593.7 94.1,778.6" fill="url(#gBweb)" />
<polygon points="89.5,582.0 94.1,584.0 94.1,781.0 89.5,779.0" fill="#7c9cc6" stroke="#b2d0f6" stroke-width="0.6" stroke-linejoin="round" />
<polygon points="127.7,791.5 784.7,604.6 784.7,613.2 127.7,800.0" fill="#3f4f63" stroke="#b2d0f6" stroke-width="0.9" stroke-linejoin="round" />
<polygon points="743.1,593.7 755.8,585.2 784.7,596.1 782.9,604.0 778.7,605.8" fill="#e3b600" stroke="#ffd500" stroke-width="0.7" stroke-linejoin="round" />
<polygon points="784.7,596.1 784.7,604.6 782.9,604.0" fill="#b08a00" stroke="#ffd500" stroke-width="0.5" stroke-linejoin="round" />
<polygon points="774.5,615.8 784.7,613.2 784.7,621.0 781.5,620.5" fill="#c9a200" stroke="#ffd500" stroke-width="0.6" stroke-linejoin="round" />
<polygon points="296.2,552.3 302.4,550.5 302.4,709.6 296.2,709.6" fill="#8c7100" stroke="#ffd600" stroke-width="1.2" stroke-linejoin="round" />
<polygon points="302.8,550.3 332.6,541.8 332.6,728.0 308.0,719.0 302.8,711.0" fill="url(#gStf)" />
<polyline points="332.6,541.8 332.6,728.0" fill="none" stroke="#3552a0" stroke-width="0.7" />
<polyline points="340.3,539.6 340.3,729.5" fill="none" stroke="#2f4890" stroke-width="0.7" />
<polygon points="332.6,541.8 340.3,539.6 340.3,729.5 332.6,728.0" fill="#121a35" />
<polygon points="304.1,721.7 308.0,718.6 332.6,729.0 331.3,734.0" fill="#e3b600" stroke="#ffd500" stroke-width="0.6" stroke-linejoin="round" />
<polygon points="55.1,565.3 706.6,379.2 784.1,407.2 127.7,593.2" fill="#7494bc" />
<polyline points="55.1,565.3 706.6,379.2" fill="none" stroke="#86a8d4" stroke-width="0.6" />
<g clip-path="url(#cTf)">
<polygon points="690.0,374.0 712.0,372.0 790.0,404.0 772.0,420.0" fill="#2a3f62" opacity="0.4" filter="url(#soft3)"/>
</g>
<polygon points="127.7,593.2 784.1,407.2 784.1,414.4 127.7,601.5" fill="#3f4f63" stroke="#b2d0f6" stroke-width="0.9" stroke-linejoin="round" />
<polygon points="55.1,565.3 127.7,593.2 127.7,601.5 55.1,573.8" fill="#7a9ac4" stroke="#b2d0f6" stroke-width="0.6" stroke-linejoin="round" />
<polygon points="706.6,379.2 713.4,370.2 784.6,400.3 777.7,408.5" fill="#e3b600" stroke="#ffd500" stroke-width="0.7" stroke-linejoin="round" />
<polygon points="784.6,400.3 784.6,407.6 777.7,408.5" fill="#b08a00" stroke="#ffd500" stroke-width="0.5" stroke-linejoin="round" />
<polygon points="772.3,416.7 784.1,414.4 784.1,423.0" fill="#9a7c00" stroke="#ffd500" stroke-width="0.7" stroke-linejoin="round" />
<g transform="translate(776.8,452.5) scale(1.00)" stroke="#ffd500" stroke-width="0.8" stroke-linejoin="round"><path d="M5.1,-14.5 Q11,-11.5 13,-4 Q14.6,2.5 13,8 Q11,12.5 7.7,13.6 L0.35,13.7 L-1.4,-14.5Z" fill="#c9a600"/><polygon points="-9.6,-11.7 -1.4,-14.5 5.1,-14.5 6.4,-9.6 0.1,-7.4" fill="#8f7800"/><polygon points="0.1,-7.4 6.4,-9.6 10.3,2.5 4,3.4" fill="#6e5c00"/><polygon points="4,3.4 10.3,2.5 7.7,11.6 0.35,13.7" fill="#4d3f00"/><polygon points="-13.7,-2.2 -9.6,-11.7 0.1,-7.4 4,3.4 0.35,13.7 -9.6,11.6" fill="url(#gBolt)"/></g>
<g transform="translate(776.8,556.0) scale(1.00)" stroke="#ffd500" stroke-width="0.8" stroke-linejoin="round"><path d="M5.1,-14.5 Q11,-11.5 13,-4 Q14.6,2.5 13,8 Q11,12.5 7.7,13.6 L0.35,13.7 L-1.4,-14.5Z" fill="#c9a600"/><polygon points="-9.6,-11.7 -1.4,-14.5 5.1,-14.5 6.4,-9.6 0.1,-7.4" fill="#8f7800"/><polygon points="0.1,-7.4 6.4,-9.6 10.3,2.5 4,3.4" fill="#6e5c00"/><polygon points="4,3.4 10.3,2.5 7.7,11.6 0.35,13.7" fill="#4d3f00"/><polygon points="-13.7,-2.2 -9.6,-11.7 0.1,-7.4 4,3.4 0.35,13.7 -9.6,11.6" fill="url(#gBolt)"/></g>
<g transform="translate(776.8,707.0) scale(1.00)" stroke="#ffd500" stroke-width="0.8" stroke-linejoin="round"><path d="M5.1,-14.5 Q11,-11.5 13,-4 Q14.6,2.5 13,8 Q11,12.5 7.7,13.6 L0.35,13.7 L-1.4,-14.5Z" fill="#c9a600"/><polygon points="-9.6,-11.7 -1.4,-14.5 5.1,-14.5 6.4,-9.6 0.1,-7.4" fill="#8f7800"/><polygon points="0.1,-7.4 6.4,-9.6 10.3,2.5 4,3.4" fill="#6e5c00"/><polygon points="4,3.4 10.3,2.5 7.7,11.6 0.35,13.7" fill="#4d3f00"/><polygon points="-13.7,-2.2 -9.6,-11.7 0.1,-7.4 4,3.4 0.35,13.7 -9.6,11.6" fill="url(#gBolt)"/></g>
<g transform="translate(776.8,782.0) scale(1.00)" stroke="#ffd500" stroke-width="0.8" stroke-linejoin="round"><path d="M5.1,-14.5 Q11,-11.5 13,-4 Q14.6,2.5 13,8 Q11,12.5 7.7,13.6 L0.35,13.7 L-1.4,-14.5Z" fill="#c9a600"/><polygon points="-9.6,-11.7 -1.4,-14.5 5.1,-14.5 6.4,-9.6 0.1,-7.4" fill="#8f7800"/><polygon points="0.1,-7.4 6.4,-9.6 10.3,2.5 4,3.4" fill="#6e5c00"/><polygon points="4,3.4 10.3,2.5 7.7,11.6 0.35,13.7" fill="#4d3f00"/><polygon points="-13.7,-2.2 -9.6,-11.7 0.1,-7.4 4,3.4 0.35,13.7 -9.6,11.6" fill="url(#gBolt)"/></g>
<g transform="translate(776.8,857.7) scale(1.00)" stroke="#ffd500" stroke-width="0.8" stroke-linejoin="round"><path d="M5.1,-14.5 Q11,-11.5 13,-4 Q14.6,2.5 13,8 Q11,12.5 7.7,13.6 L0.35,13.7 L-1.4,-14.5Z" fill="#c9a600"/><polygon points="-9.6,-11.7 -1.4,-14.5 5.1,-14.5 6.4,-9.6 0.1,-7.4" fill="#8f7800"/><polygon points="0.1,-7.4 6.4,-9.6 10.3,2.5 4,3.4" fill="#6e5c00"/><polygon points="4,3.4 10.3,2.5 7.7,11.6 0.35,13.7" fill="#4d3f00"/><polygon points="-13.7,-2.2 -9.6,-11.7 0.1,-7.4 4,3.4 0.35,13.7 -9.6,11.6" fill="url(#gBolt)"/></g>
<g transform="translate(862.6,409.2) scale(0.76)" stroke="#ffd500" stroke-width="0.8" stroke-linejoin="round"><path d="M5.1,-14.5 Q11,-11.5 13,-4 Q14.6,2.5 13,8 Q11,12.5 7.7,13.6 L0.35,13.7 L-1.4,-14.5Z" fill="#c9a600"/><polygon points="-9.6,-11.7 -1.4,-14.5 5.1,-14.5 6.4,-9.6 0.1,-7.4" fill="#8f7800"/><polygon points="0.1,-7.4 6.4,-9.6 10.3,2.5 4,3.4" fill="#6e5c00"/><polygon points="4,3.4 10.3,2.5 7.7,11.6 0.35,13.7" fill="#4d3f00"/><polygon points="-13.7,-2.2 -9.6,-11.7 0.1,-7.4 4,3.4 0.35,13.7 -9.6,11.6" fill="url(#gBolt)"/></g>
<g transform="translate(862.6,465.5) scale(0.76)" stroke="#ffd500" stroke-width="0.8" stroke-linejoin="round"><path d="M5.1,-14.5 Q11,-11.5 13,-4 Q14.6,2.5 13,8 Q11,12.5 7.7,13.6 L0.35,13.7 L-1.4,-14.5Z" fill="#c9a600"/><polygon points="-9.6,-11.7 -1.4,-14.5 5.1,-14.5 6.4,-9.6 0.1,-7.4" fill="#8f7800"/><polygon points="0.1,-7.4 6.4,-9.6 10.3,2.5 4,3.4" fill="#6e5c00"/><polygon points="4,3.4 10.3,2.5 7.7,11.6 0.35,13.7" fill="#4d3f00"/><polygon points="-13.7,-2.2 -9.6,-11.7 0.1,-7.4 4,3.4 0.35,13.7 -9.6,11.6" fill="url(#gBolt)"/></g>
<ellipse cx="1342" cy="263.8" rx="42.2" ry="17.2" fill="#c4c4c4"/>
<ellipse cx="1342" cy="262.6" rx="32" ry="12.4" fill="#fff"/>
<ellipse cx="1342" cy="268" rx="27" ry="8" fill="#777" opacity="0.55" filter="url(#soft2)"/>
<ellipse cx="1342" cy="281" rx="20" ry="3" fill="#999" opacity="0.35" filter="url(#soft2)"/>
<polygon points="1314.3,224.1 1343.4,219.1 1370.3,225.0 1368.1,260.8 1339.5,273.7 1316.2,258.9" fill="#686868" />
<polygon points="1314.3,224.1 1343.4,219.1 1370.3,225.0 1339.7,230.9" fill="#6c6c6c" />
<polyline points="1343.4,219.1 1343.4,250.8" fill="none" stroke="#7c7c7c" stroke-width="0.6" />
<polyline points="1316.2,258.9 1343.4,250.8 1368.1,260.8" fill="none" stroke="#7c7c7c" stroke-width="0.6" />
<polyline points="1314.3,224.1 1343.4,219.1 1370.3,225.0 1368.1,260.8 1339.5,273.7 1316.2,258.9 1314.3,224.1 1339.7,230.9 1370.3,225.0" fill="none" stroke="#0a0a0a" stroke-width="1.0" stroke-linejoin="round"/>
<polyline points="1339.7,230.9 1339.5,273.7" fill="none" stroke="#0a0a0a" stroke-width="1.0" />
<polyline points="1298.5,271.5 1310.5,266.8" fill="none" stroke="#555" stroke-width="0.8" />
<polyline points="1367.5,269.0 1378.0,275.0" fill="none" stroke="#555" stroke-width="0.8" />
<polygon points="1298.0,271.8 1301.0,269.3 1301.6,271.6" fill="#444" />
<polygon points="1378.4,275.2 1375.2,275.0 1376.4,272.8" fill="#444" />
<text x="1327" y="252" font-family="Liberation Sans, sans-serif" font-size="7.5" fill="#fff" text-anchor="middle" transform="skewY(12)" style="transform-origin:1327px 249px">-X</text>
<text x="1356" y="252" font-family="Liberation Sans, sans-serif" font-size="7.5" fill="#fff" text-anchor="middle" transform="skewY(-14)" style="transform-origin:1356px 249px">-Y</text>
<text x="1340" y="226" font-family="Liberation Sans, sans-serif" font-size="3.5" fill="#eee" text-anchor="middle">-Z</text>
</svg>
</div>
<div class="abs" style="left:1139px;top:203px;font-size:12px;font-weight:bold;color:#f26b21;line-height:18px;white-space:nowrap;letter-spacing:-0.25px">Production cost&nbsp; <span style="color:#222;font-weight:normal">-</span>&nbsp; <span style="color:#111">134 &euro;</span></div>
<svg class="abs" style="left:1172px;top:303px" width="200" height="22"><path d="M0,0 H183 L198,10.7 L183,21.4 H0Z" fill="#f26b21"/></svg>
<div class="abs" style="left:1181px;top:303px;font-size:13px;font-weight:bold;color:#fff;line-height:22px;white-space:nowrap;letter-spacing:-0.15px">COLUMN C1 Pr1 -</div>
<div class="abs" style="left:1375px;top:303px;width:9px;height:789px;background:#f0f0f0"></div>
<div class="abs" style="left:1375px;top:303px;width:9px;height:505px;background:#cdcdcd"></div>
<div class="tg" style="top:325px">Members</div>
<div class="abs" style="left:1180px;top:332px;width:0;height:0;border-top:4px solid transparent;border-bottom:4px solid transparent;border-left:5px solid #333"></div>
<div class="tg" style="top:347px">Load effects</div>
<div class="abs" style="left:1180px;top:354px;width:0;height:0;border-top:4px solid transparent;border-bottom:4px solid transparent;border-left:5px solid #333"></div>
<div class="tg" style="top:369px">Operations</div>
<div class="abs" style="left:1179px;top:377px;width:0;height:0;border-left:6px solid transparent;border-bottom:6px solid #333"></div>
<div class="cb" style="top:396px"></div><div class="ti" style="top:391px">Work plane 1</div>
<div class="cb" style="top:418px"></div><div class="ti" style="top:413px">Cut 1</div>
<div class="cb" style="top:440px"></div><div class="ti" style="top:435px">Work plane 2</div>
<div class="cb" style="top:462px"></div><div class="ti" style="top:457px">Cut 2</div>
<div class="cb" style="top:484px"></div><div class="ti" style="top:479px">Work plane 3</div>
<div class="cb" style="top:506px"></div><div class="ti" style="top:501px">Cut 3</div>
<div class="cb" style="top:528px"></div><div class="ti" style="top:523px">Work plane 4</div>
<div class="cb" style="top:550px"></div><div class="ti" style="top:545px">Cut 4</div>
<div class="cb" style="top:572px"></div><div class="ti" style="top:567px">Work plane 5</div>
<div class="cb" style="top:594px"></div><div class="ti" style="top:589px">Cut 5</div>
<div class="cb" style="top:616px"></div><div class="ti" style="top:611px">Stiffening member 1</div>
<div class="cb" style="top:638px"></div><div class="ti" style="top:633px">Stiffening member 2</div>
<div class="cb" style="top:660px"></div><div class="ti" style="top:655px">Plate 1</div>
<div class="cb" style="top:682px"></div><div class="ti" style="top:677px">Plate 2</div>
<div class="cb" style="top:704px"></div><div class="ti" style="top:699px">Plate 3</div>
<div class="cb" style="top:726px"></div><div class="ti" style="top:721px">Plate 4</div>
<div class="cb" style="top:748px"></div><div class="ti" style="top:743px">Plate 5</div>
<div class="cb" style="top:770px"></div><div class="ti" style="top:765px">Plate 6</div>
<div class="cb" style="top:792px"></div><div class="ti" style="top:787px">Plate 7</div>
<div class="cb" style="top:814px"></div><div class="ti" style="top:809px">Plate 8</div>
<div class="cb" style="top:836px"></div><div class="ti" style="top:831px">Plate 9</div>
<div class="cb" style="top:858px"></div><div class="ti" style="top:853px">Bolts 1</div>
<div class="cb" style="top:880px"></div><div class="ti" style="top:875px">Bolts 2</div>
<div class="cb" style="top:902px"></div><div class="ti" style="top:897px">Bolts 3</div>
<div class="cb" style="top:924px"></div><div class="ti" style="top:919px">Bolts 4</div>
<div class="cb" style="top:946px"></div><div class="ti" style="top:941px">Bolts 5</div>
<div class="cb" style="top:968px"></div><div class="ti" style="top:963px">Weld 1</div>
<div class="cb" style="top:990px"></div><div class="ti" style="top:985px">Weld 2</div>
<div class="cb" style="top:1012px"></div><div class="ti" style="top:1007px">Weld 3</div>
<div class="cb" style="top:1034px"></div><div class="ti" style="top:1029px">Weld 4</div>
<div class="cb" style="top:1056px"></div><div class="ti" style="top:1051px">Weld 5</div>
<div class="cb" style="top:1078px"></div><div class="ti" style="top:1073px">Weld 6</div>
<svg class="abs" style="left:0;top:0;pointer-events:none" width="1920" height="1160" fill="none" stroke="#ff8c00" stroke-width="2.2" stroke-linecap="round" stroke-linejoin="round"><path d="M1205,402.4 L1207.9,405.0 L1214.9,395.9" /><path d="M1205,424.4 L1207.9,427.0 L1214.9,417.9" /><path d="M1205,446.4 L1207.9,449.0 L1214.9,439.9" /><path d="M1205,468.4 L1207.9,471.0 L1214.9,461.9" /><path d="M1205,490.4 L1207.9,493.0 L1214.9,483.9" /><path d="M1205,512.4 L1207.9,515.0 L1214.9,505.9" /><path d="M1205,534.4 L1207.9,537.0 L1214.9,527.9" /><path d="M1205,556.4 L1207.9,559.0 L1214.9,549.9" /><path d="M1205,578.4 L1207.9,581.0 L1214.9,571.9" /><path d="M1205,600.4 L1207.9,603.0 L1214.9,593.9" /><path d="M1205,622.4 L1207.9,625.0 L1214.9,615.9" /><path d="M1205,644.4 L1207.9,647.0 L1214.9,637.9" /><path d="M1205,666.4 L1207.9,669.0 L1214.9,659.9" /><path d="M1205,688.4 L1207.9,691.0 L1214.9,681.9" /><path d="M1205,710.4 L1207.9,713.0 L1214.9,703.9" /><path d="M1205,732.4 L1207.9,735.0 L1214.9,725.9" /><path d="M1205,754.4 L1207.9,757.0 L1214.9,747.9" /><path d="M1205,776.4 L1207.9,779.0 L1214.9,769.9" /><path d="M1205,798.4 L1207.9,801.0 L1214.9,791.9" /><path d="M1205,820.4 L1207.9,823.0 L1214.9,813.9" /><path d="M1205,842.4 L1207.9,845.0 L1214.9,835.9" /><path d="M1205,864.4 L1207.9,867.0 L1214.9,857.9" /><path d="M1205,886.4 L1207.9,889.0 L1214.9,879.9" /><path d="M1205,908.4 L1207.9,911.0 L1214.9,901.9" /><path d="M1205,930.4 L1207.9,933.0 L1214.9,923.9" /><path d="M1205,952.4 L1207.9,955.0 L1214.9,945.9" /><path d="M1205,974.4 L1207.9,977.0 L1214.9,967.9" /><path d="M1205,996.4 L1207.9,999.0 L1214.9,989.9" /><path d="M1205,1018.4 L1207.9,1021.0 L1214.9,1011.9" /><path d="M1205,1040.4 L1207.9,1043.0 L1214.9,1033.9" /><path d="M1205,1062.4 L1207.9,1065.0 L1214.9,1055.9" /><path d="M1205,1084.4 L1207.9,1087.0 L1214.9,1077.9" /></svg>
</div></body></html>
